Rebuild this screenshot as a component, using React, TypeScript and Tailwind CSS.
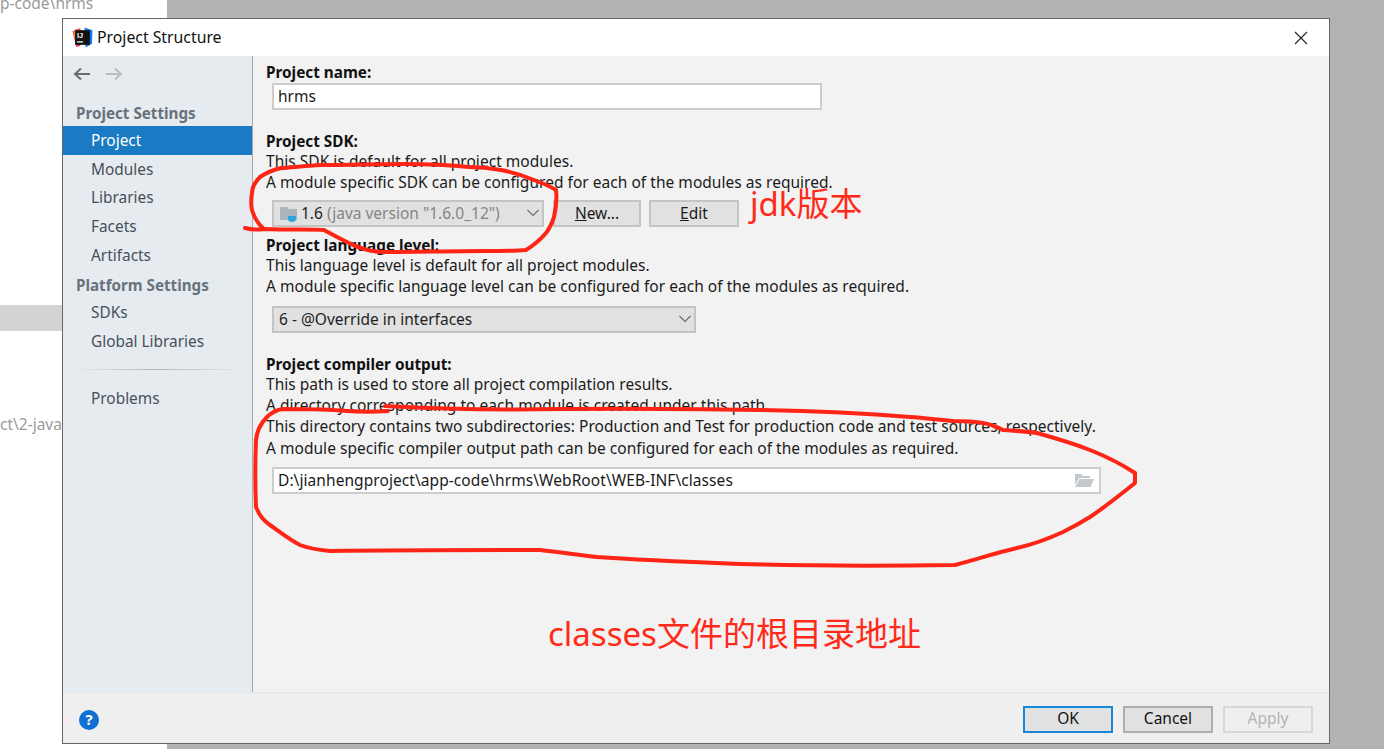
const font = { fontFamily: '"Noto Sans", "Noto Sans CJK SC", sans-serif' };

const SIDE_GROUPS = [
  { title: 'Project Settings', items: ['Project', 'Modules', 'Libraries', 'Facets', 'Artifacts'] },
  { title: 'Platform Settings', items: ['SDKs', 'Global Libraries'] },
];

function Chevron() {
  return (
    <svg width="14" height="8" viewBox="0 0 14 8" fill="none" stroke="#6e6e6e" strokeWidth="1.2">
      <path d="M1.5 1 L7 6.5 L12.5 1" />
    </svg>
  );
}

function Combo({ width, children }: { width: string; children: React.ReactNode }) {
  return (
    <div className={`${width} h-[27px] flex items-center justify-between bg-[#e1e1e1] border-2 border-[#c4c4c4] pl-[5px] pr-[2px]`}>
      <div className="flex items-center pt-[1px] text-[15.5px] text-[#1f1f1f] whitespace-nowrap">{children}</div>
      <Chevron />
    </div>
  );
}

function DlgButton({ children, cls }: { children: React.ReactNode; cls: string }) {
  return (
    <div className={`w-[90px] h-[27px] flex items-center justify-center bg-[#e1e1e1] border-2 text-[15.5px] ${cls}`}>
      {children}
    </div>
  );
}

function Heading({ children }: { children: React.ReactNode }) {
  return <div className="h-[21px] leading-[22px] text-[15.3px] font-bold text-[#111] whitespace-nowrap">{children}</div>;
}

function Line({ children }: { children: React.ReactNode }) {
  return <div className="h-[21.4px] leading-[21px] text-[15.5px] text-[#1b1b1b] whitespace-nowrap tracking-[0.03px]">{children}</div>;
}

function IdeaLogo() {
  return (
    <svg width="21" height="21" viewBox="0 0 20 20">
      <path d="M0.5 4 L8 1 L8 18 L4 19 Z" fill="#f0386b" />
      <path d="M1 6 L4 1.5 L9 4 L3 12 Z" fill="#fc801d" />
      <path d="M12 0.5 L19.5 3 L19 16 L13 19.5 Z" fill="#087cfa" />
      <rect x="3" y="3" width="14" height="14" fill="#111" />
      <text x="4.8" y="10.5" fontSize="7" fontWeight="700" fill="#fff" fontFamily="Liberation Sans, sans-serif">IJ</text>
      <rect x="4.6" y="13.6" width="6" height="1.2" fill="#fff" />
    </svg>
  );
}

function Annotations() {
  return (
    <svg className="absolute left-0 top-0 pointer-events-none" width="1384" height="749" fill="none" stroke="#ff2516" strokeWidth="4" strokeLinejoin="round" strokeLinecap="round">
      <path d="M245 228 C252 230 258 230 265 229 C290 230 310 229 324 230 C335 236 347 243 358 247 C366 250 374 252 383 252 C415 252 450 251 485 251 C500 251 513 251 526 250 C534 245 541 239 546 233 C550 228 552 223 554 217 C556 208 557 198 556 190 C550 186 542 183 534 180 C522 175 512 172 501 170 C490 168 480 167 469 167 C450 165 425 164 403 164 C375 164 350 165 322 165 C305 166 295 167 281 168 C272 170 266 173 260 177 C255 182 252 187 252 193 C251 199 251 205 252 210 C254 217 258 224 264 229" />
      <path d="M388 411 C375 412 360 412 347 411 C325 409 305 409 283 409 C275 410 271 413 267 417 C260 424 257 430 256 440 C255 465 255 485 256 507 C259 515 264 521 270 525 C280 532 290 540 300 545 C310 549 320 550 330 551 C400 550 470 550 540 550 C560 552 578 555 597 557 C640 560 690 562 740 564 C810 566 880 566 955 565 C975 560 995 553 1017 548 C1035 544 1050 538 1063 532 C1073 527 1082 522 1090 517 C1105 507 1120 495 1135 483 L1135 473 C1120 463 1105 456 1090 450 C1072 443 1055 438 1037 433 C1025 431 1015 431 1003 430 C995 426 990 424 983 423 C972 421 962 421 953 421 C940 420 925 418 910 417 C860 413 810 411 760 410 C700 409 640 408 560 409 C500 410 440 409 385 406" />
    </svg>
  );
}

export default function App() {
  return (
    <div className="relative w-[1384px] h-[749px] overflow-hidden bg-[#b2b2b2]" style={font}>
      {/* the window behind the dialog */}
      <div className="w-[167px] h-full bg-white relative text-[15.5px] text-[#9a9a9a]">
        <div className="absolute -top-[8px] left-0 whitespace-nowrap">p-code\hrms</div>
        <div className="absolute left-0 top-[305px] w-full h-[26px] bg-[#d3d3d3]" />
        <div className="absolute left-0 top-[413px] w-[62px] overflow-hidden whitespace-nowrap">ct\2-java</div>
      </div>

      {/* dialog */}
      <div className="absolute left-[62px] top-[18px] w-[1268px] h-[726px] flex flex-col bg-[#f2f2f2] border border-[#666]">
        <div className="h-[37px] shrink-0 bg-white flex items-center justify-between pl-[9px] pr-[21px]">
          <div className="flex items-center gap-[4px] text-[15.8px] text-[#111]">
            <IdeaLogo />
            <span>Project Structure</span>
          </div>
          <svg width="14" height="14" viewBox="0 0 14 14" stroke="#222" strokeWidth="1.1">
            <path d="M1 1 L13 13 M13 1 L1 13" />
          </svg>
        </div>

        <div className="flex-1 flex min-h-0">
          <aside className="w-[190px] shrink-0 bg-[#e6ebf0] border-r border-[#a9a9a9] flex flex-col">
            <div className="h-[36px] flex items-center gap-[14px] pl-[10px]">
              <svg width="18" height="14" viewBox="0 0 18 14" fill="none" stroke="#6b6b6b" strokeWidth="2">
                <path d="M17 7 H2 M8 1.5 L2 7 L8 12.5" />
              </svg>
              <svg width="18" height="14" viewBox="0 0 18 14" fill="none" stroke="#bdbdbd" strokeWidth="2">
                <path d="M1 7 H16 M10 1.5 L16 7 L10 12.5" />
              </svg>
            </div>
            {SIDE_GROUPS.map((g, gi) => (
              <div key={g.title} className={gi === 0 ? 'mt-[6px]' : 'mt-[1px]'}>
                <div className="h-[28px] leading-[30px] pl-[13px] text-[15.2px] font-bold text-[#68727c]">{g.title}</div>
                {g.items.map(item => (
                  <div
                    key={item}
                    className={`h-[28.7px] leading-[29px] pl-[28px] text-[15.4px] ${item === 'Project' ? 'bg-[#1a7bc4] text-white' : 'text-[#46505a]'}`}
                  >
                    {item}
                  </div>
                ))}
              </div>
            ))}
            <div className="h-px mt-[13px] mx-[9px] bg-gradient-to-r from-[#e6ebf0] via-[#b4b4b4] to-[#e6ebf0]" />
            <div className="mt-[14px] h-[28.8px] leading-[29px] pl-[28px] text-[15.4px] text-[#46505a]">Problems</div>
          </aside>

          <main className="flex-1 pl-[13px] pt-[5px] min-w-0">
            <Heading>Project name:</Heading>
            <div className="ml-[6px] mt-[1px] w-[550px] h-[27px] bg-white border-2 border-[#cdcdcd] flex items-center pl-[4px] text-[15.5px] text-[#1b1b1b]">hrms</div>

            <div className="mt-[20px]"><Heading>Project SDK:</Heading></div>
            <Line>This SDK is default for all project modules.</Line>
            <Line>A module specific SDK can be configured for each of the modules as required.</Line>
            <div className="flex ml-[6px] mt-[6px] gap-[9px]">
              <Combo width="w-[272px]">
                <svg className="mr-[2px]" width="20" height="18" viewBox="0 0 20 18">
                  <path d="M1 2 H8 L10 4 H18 V15 H1 Z" fill="#a9b4bd" />
                  <path d="M9 11 H17 V14 C17 16 15 17 13 17 C11 17 9 16 9 14 Z" fill="#2ea4dd" />
                </svg>
                <span>1.6 <span className="text-[#858585]">(java version "1.6.0_12")</span></span>
              </Combo>
              <DlgButton cls="w-[88px]! border-[#c4c4c4] text-[#1b1b1b]"><span><u>N</u>ew...</span></DlgButton>
              <div className="ml-[-1px]"><DlgButton cls="border-[#c4c4c4] text-[#1b1b1b]"><span><u>E</u>dit</span></DlgButton></div>
            </div>

            <div className="mt-[7px]"><Heading>Project language level:</Heading></div>
            <Line>This language level is default for all project modules.</Line>
            <Line>A module specific language level can be configured for each of the modules as required.</Line>
            <div className="ml-[6px] mt-[8px]">
              <Combo width="w-[424px]">6 - @Override in interfaces</Combo>
            </div>

            <div className="mt-[20px]"><Heading>Project compiler output:</Heading></div>
            <Line>This path is used to store all project compilation results.</Line>
            <Line>A directory corresponding to each module is created under this path.</Line>
            <Line>This directory contains two subdirectories: Production and Test for production code and test sources, respectively.</Line>
            <Line>A module specific compiler output path can be configured for each of the modules as required.</Line>
            <div className="ml-[6px] mt-[8px] w-[829px] h-[27px] bg-white border-2 border-[#cdcdcd] flex items-center justify-between pl-[4px] pr-[5px] text-[15.5px] text-[#1b1b1b]">
              <span className="tracking-[0.07px]">D:\jianhengproject\app-code\hrms\WebRoot\WEB-INF\classes</span>
              <svg width="20" height="15" viewBox="0 0 20 15">
                <path d="M1 1 H7 L9 3 H16 V5 H5 L1 12 Z" fill="#c3c8cc" />
                <path d="M5.5 6 H20 L16.5 14 H1 Z" fill="#c3c8cc" />
              </svg>
            </div>
          </main>
        </div>

        <div className="h-[51px] shrink-0 bg-[#efefef] border-t border-[#e6e6e6] flex items-center justify-between pl-[16px] pr-[16px] pt-[2px]">
          <div className="mt-[1px] w-[20px] h-[20px] rounded-full bg-[#0f70d4] text-white text-[15px] font-bold flex items-center justify-center leading-none">?</div>
          <div className="flex gap-[10px]">
            <DlgButton cls="border-[#1a86d8] text-[#111]">OK</DlgButton>
            <DlgButton cls="border-[#adadad] text-[#111]">Cancel</DlgButton>
            <DlgButton cls="bg-transparent! border-[#d6d6d6] text-[#b3b3b3]">Apply</DlgButton>
          </div>
        </div>
      </div>

      {/* hand drawn notes on top of the screenshot */}
      <Annotations />
      <div className="absolute left-[750px] top-[182px] text-[33px] leading-[44px] text-[#ff2a1a] whitespace-nowrap">jdk版本</div>
      <div className="absolute left-[548px] top-[612px] text-[33px] leading-[44px] text-[#ff2a1a] whitespace-nowrap">classes文件的根目录地址</div>
    </div>
  );
}
